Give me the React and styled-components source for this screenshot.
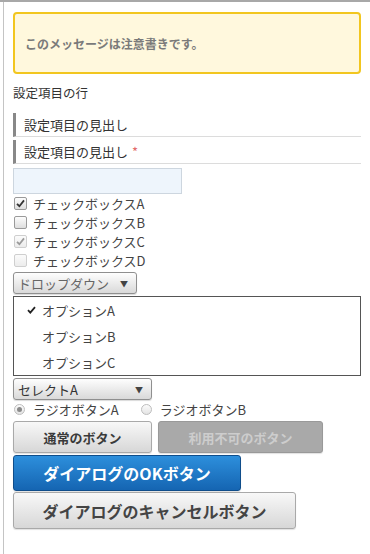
import React from "react";
import styled, { createGlobalStyle } from "styled-components";

const GlobalStyle = createGlobalStyle`
  html, body {
    margin: 0;
    padding: 0;
    background: #fff;
  }
  body {
    font-family: "Noto Sans CJK JP", "Liberation Sans", sans-serif;
    color: #333;
  }
`;

const Page = styled.div`
  box-sizing: border-box;
  height: 554px;
  border-top: 2px solid #a8a8a8;
  margin-left: 0;
  padding-left: 3px;
`;

const Frame = styled.div`
  box-sizing: border-box;
  height: 552px;
  border-left: 1px solid #c4c4c4;
  padding: 10px 8px 0 9px;
  display: flex;
  flex-direction: column;
  align-items: flex-start;
`;

const Notice = styled.div`
  box-sizing: border-box;
  width: 348px;
  height: 62px;
  border: 2px solid #f2c61f;
  border-radius: 4px;
  background: #fff8dd;
  display: flex;
  align-items: center;
  padding-left: 10px;
  font-size: 12px;
  font-weight: bold;
  color: #7a7a7a;
`;

const RowLabel = styled.div`
  margin-top: 10px;
  font-size: 12.5px;
  line-height: 18px;
  color: #333;
`;

const Heading = styled.div`
  box-sizing: border-box;
  width: 348px;
  height: 24px;
  margin-top: ${(p) => p.$gap}px;
  border-left: 3px solid #888;
  border-bottom: 1px solid #dcdcdc;
  padding-left: 8px;
  font-size: 13px;
  line-height: 23px;
  color: #333;
`;

const Required = styled.span`
  color: #e36a6a;
  margin-left: 4px;
`;

const TextInput = styled.input`
  box-sizing: border-box;
  width: 169px;
  height: 26px;
  margin: 4px 0 0;
  border: 1px solid #cdd6df;
  background: #eef5fc;
  outline: none;
`;

const CheckRow = styled.div`
  height: 19px;
  display: flex;
  align-items: center;
  font-size: 13px;
  color: #444;
`;

const Box = styled.span`
  box-sizing: border-box;
  width: 13px;
  height: 13px;
  margin-left: 1px;
  margin-right: 6px;
  border: 1px solid ${(p) => (p.$disabled ? "#cfcfcf" : "#9a9a9a")};
  border-radius: 2px;
  background: ${(p) =>
    p.$disabled
      ? "linear-gradient(#fbfbfb, #ececec)"
      : "linear-gradient(#fdfdfd, #dedede)"};
  display: flex;
  align-items: center;
  justify-content: center;
`;

const Checkbox = ({ label, checked, disabled }) => (
  <CheckRow>
    <Box $disabled={disabled}>
      {checked ? (
        <svg width="9" height="9" viewBox="0 0 9 9">
          <path
            d="M1 4.8 L3.4 7.2 L8 1.4"
            fill="none"
            stroke={disabled ? "#9a9a9a" : "#333"}
            strokeWidth="1.8"
          />
        </svg>
      ) : null}
    </Box>
    {label}
  </CheckRow>
);

const DropButton = styled.div`
  box-sizing: border-box;
  width: ${(p) => p.$width}px;
  height: 22px;
  margin-top: ${(p) => p.$gap}px;
  border: 1px solid #8f8f8f;
  border-radius: 3px;
  background: linear-gradient(#fefefe, #d9d9d9);
  box-shadow: 0 1px 1px rgba(0, 0, 0, 0.15);
  display: flex;
  align-items: center;
  justify-content: space-between;
  padding: 0 8px 0 4px;
  font-size: 13px;
  color: ${(p) => p.$color};
`;

const Caret = styled.span`
  font-size: 8px;
  color: #444;
`;

const Menu = styled.div`
  box-sizing: border-box;
  width: 348px;
  margin-top: 2px;
  border: 1px solid #555;
  padding: 0;
`;

const MenuItem = styled.div`
  height: 26px;
  display: flex;
  align-items: center;
  font-size: 13px;
  color: #444;
`;

const Tick = styled.span`
  width: 28px;
  display: flex;
  justify-content: flex-end;
  padding-right: 6px;
  box-sizing: border-box;
`;

const RadioRow = styled.div`
  height: 19px;
  display: flex;
  align-items: center;
  font-size: 13px;
  color: #444;
`;

const Radio = styled.span`
  box-sizing: border-box;
  width: 11px;
  height: 11px;
  border-radius: 50%;
  border: 1px solid #bdbdbd;
  background: linear-gradient(#fbfbfb, #e4e4e4);
  margin-left: ${(p) => p.$left}px;
  margin-right: 8px;
  display: flex;
  align-items: center;
  justify-content: center;
  &::after {
    content: "";
    display: ${(p) => (p.$checked ? "block" : "none")};
    width: 5px;
    height: 5px;
    border-radius: 50%;
    background: #8a8a8a;
  }
`;

const ButtonRow = styled.div`
  display: flex;
  gap: 6px;
  margin-top: 2px;
`;

const Button = styled.button`
  box-sizing: border-box;
  width: ${(p) => p.$width}px;
  height: ${(p) => p.$height}px;
  margin: 0;
  padding: 0;
  border-radius: 3px;
  font-family: inherit;
  font-weight: bold;
  font-size: ${(p) => p.$size}px;
  cursor: pointer;
  border: 1px solid #a9a9a9;
  background: linear-gradient(#f8f8f8, #d7d7d7);
  color: #3a3a3a;
  box-shadow: 0 1px 1px rgba(0, 0, 0, 0.12);

  &:disabled {
    background: #a9a9a9;
    border-color: #999;
    color: #cdcdcd;
    cursor: default;
  }
`;

const OkButton = styled(Button)`
  margin-top: 2px;
  border: 1px solid #0f4d8a;
  background: linear-gradient(#2d8fdc, #1565b2);
  color: #fff;
`;

const CancelButton = styled(Button)`
  margin-top: 1px;
  color: #444;
`;

export default function App() {
  return (
    <>
      <GlobalStyle />
      <Page>
        <Frame>
          <Notice>このメッセージは注意書きです。</Notice>
          <RowLabel>設定項目の行</RowLabel>
          <Heading $gap={11}>設定項目の見出し</Heading>
          <Heading $gap={3}>
            設定項目の見出し<Required>*</Required>
          </Heading>
          <TextInput type="text" />
          <Checkbox label="チェックボックスA" checked />
          <Checkbox label="チェックボックスB" />
          <Checkbox label="チェックボックスC" checked disabled />
          <Checkbox label="チェックボックスD" disabled />
          <DropButton $width={124} $gap={2} $color="#666">
            ドロップダウン <Caret>▼</Caret>
          </DropButton>
          <Menu>
            <MenuItem>
              <Tick>
                <svg width="9" height="8" viewBox="0 0 9 8">
                  <path
                    d="M1 4.2 L3.3 6.6 L8 1.2"
                    fill="none"
                    stroke="#222"
                    strokeWidth="1.8"
                  />
                </svg>
              </Tick>
              オプションA
            </MenuItem>
            <MenuItem>
              <Tick />
              オプションB
            </MenuItem>
            <MenuItem>
              <Tick />
              オプションC
            </MenuItem>
          </Menu>
          <DropButton $width={139} $gap={2} $color="#333">
            セレクトA <Caret>▼</Caret>
          </DropButton>
          <RadioRow>
            <Radio $left={1} $checked />
            ラジオボタンA
            <Radio $left={22} />
            ラジオボタンB
          </RadioRow>
          <ButtonRow>
            <Button $width={139} $height={32} $size={13}>
              通常のボタン
            </Button>
            <Button $width={165} $height={32} $size={13} disabled>
              利用不可のボタン
            </Button>
          </ButtonRow>
          <OkButton $width={228} $height={36} $size={16}>
            ダイアログのOKボタン
          </OkButton>
          <CancelButton $width={283} $height={37} $size={16}>
            ダイアログのキャンセルボタン
          </CancelButton>
        </Frame>
      </Page>
    </>
  );
}
